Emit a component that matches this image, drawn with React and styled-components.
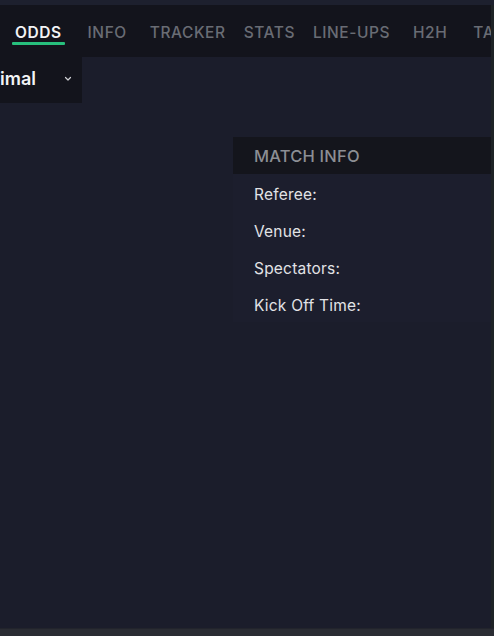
import React from "react";
import styled, {createGlobalStyle} from "styled-components";

const GlobalStyle = createGlobalStyle`
    html, body {
        margin: 0;
        padding: 0;
        background: #1b1d2b;
        font-family: Inter, "Liberation Sans", sans-serif;
        -webkit-font-smoothing: antialiased;
    }
`

const Page = styled.div`
    width: 494px;
    height: 636px;
    display: flex;
    flex-direction: column;
    background: #1b1d2b;
    overflow: hidden;
`
const TopStrip = styled.div`
    height: 5px;
    background: #1d202e;
`
const Body = styled.div`
    flex: 1;
    display: flex;
    border-right: 3px solid #1e2326;
`
const Main = styled.div`
    flex: 1;
    min-width: 0;
    display: flex;
    flex-direction: column;
`
const TabBar = styled.div`
    height: 52px;
    background: #13141c;
    display: flex;
    align-items: stretch;
    padding-left: 12px;
    white-space: nowrap;
    overflow: hidden;
`
const Tab = styled.div`
    position: relative;
    flex-shrink: 0;
    display: flex;
    align-items: center;
    margin-right: ${p => p.gap}px;
    padding: 3px 3px 0;
    font-size: 15.5px;
    font-weight: ${p => p.active ? 600 : 500};
    letter-spacing: 0.55px;
    color: ${p => p.active ? "#f2f3f5" : "#696c74"};

    &::after {
        content: "";
        display: ${p => p.active ? "block" : "none"};
        position: absolute;
        left: 0;
        right: 0;
        top: 37px;
        height: 3px;
        border-radius: 1px;
        background: #27c07d;
    }
`
const Content = styled.div`
    flex: 1;
    display: flex;
    align-items: flex-start;
`
const Select = styled.div`
    width: 82px;
    height: 46px;
    flex-shrink: 0;
    background: #13141c;
    display: flex;
    align-items: center;
    justify-content: space-between;
    padding-right: 10px;
    padding-bottom: 4px;
    box-sizing: border-box;
    font-size: 18px;
    font-weight: 600;
    color: #f2f3f5;
    overflow: hidden;
`
const Chevron = styled.svg`
    width: 8px;
    height: 8px;
    margin-top: 2px;
`
const Panel = styled.div`
    margin-left: auto;
    margin-top: 80px;
    width: 258px;
    display: flex;
    flex-direction: column;
    background: #1c1e2d;
`
const PanelHeader = styled.div`
    height: 37px;
    background: #14151c;
    display: flex;
    align-items: center;
    padding-left: 21px;
    font-size: 16.5px;
    font-weight: 500;
    color: #8c8e94;
    letter-spacing: 0.2px;
`
const InfoRow = styled.div`
    height: 37px;
    display: flex;
    align-items: center;
    padding: 3px 0 0 21px;
    box-sizing: border-box;
    font-size: 15.5px;
    color: #e2e3e6;
    letter-spacing: 0.2px;
`
const BottomStrip = styled.div`
    height: 7px;
    background: #2a2c33;
    border-top: 1px solid #22242c;
`

const tabs = [
    {label: "ODDS", gap: 20, active: true},
    {label: "INFO", gap: 17},
    {label: "TRACKER", gap: 12},
    {label: "STATS", gap: 12},
    {label: "LINE-UPS", gap: 17},
    {label: "H2H", gap: 20},
    {label: "TABLE", gap: 0},
]

const rows = ["Referee:", "Venue:", "Spectators:", "Kick Off Time:"]

export default function App() {
    return (
        <Page>
            <GlobalStyle/>
            <TopStrip/>
            <Body>
                <Main>
                    <TabBar>
                        {tabs.map(t => <Tab key={t.label} active={t.active} gap={t.gap}>{t.label}</Tab>)}
                    </TabBar>
                    <Content>
                        <Select>
                            <span>imal</span>
                            <Chevron viewBox="0 0 8 8">
                                <path d="M1.5 2.5 L4 5 L6.5 2.5" stroke="#d0d1d4" strokeWidth="1.2" fill="none"
                                      strokeLinecap="round" strokeLinejoin="round"/>
                            </Chevron>
                        </Select>
                        <Panel>
                            <PanelHeader>MATCH INFO</PanelHeader>
                            {rows.map(r => <InfoRow key={r}>{r}</InfoRow>)}
                        </Panel>
                    </Content>
                </Main>
            </Body>
            <BottomStrip/>
        </Page>
    );
}
